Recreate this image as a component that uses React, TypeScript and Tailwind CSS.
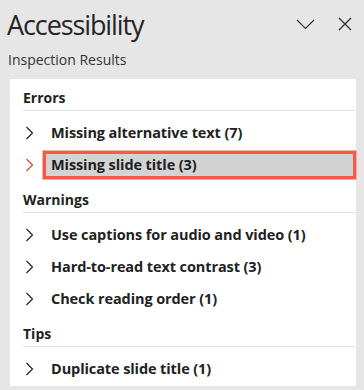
import React from "react";

const Chevron = ({ red = false }: { red?: boolean }) => (
  <svg width="9" height="14" viewBox="0 0 9 14" className="shrink-0">
    <path d="M1.5 1 L7.5 7 L1.5 13" fill="none" stroke={red ? "#d2472f" : "#222"} strokeWidth="1.2" />
  </svg>
);

const Heading = ({ children }: { children: React.ReactNode }) => (
  <div className="mr-[1px] h-[32px] flex items-center pt-[5px] border-b border-[#e1e1e1] text-[14px] font-bold text-[#222] mb-[6px]">
    {children}
  </div>
);

const Row = ({ children }: { children: React.ReactNode }) => (
  <div className="h-[32px] flex items-center">
    <div className="w-[28px] pl-[2px] flex items-center">
      <Chevron />
    </div>
    <span className="text-[14.5px] font-bold text-[#222] tracking-[-0.1px]">{children}</span>
  </div>
);

export default function App() {
  return (
    <div
      className="w-[364px] h-[390px] bg-[#e6e6e6] flex flex-col overflow-hidden"
      style={{ fontFamily: '"Open Sans", "Noto Sans", sans-serif' }}
    >
      <div className="flex items-start justify-between pl-[7px] pr-[12px] pt-[6px] h-[47px]">
        <div className="text-[27px] leading-[38px] text-[#262626] font-normal tracking-[-1.1px]">Accessibility</div>
        <div className="flex items-center gap-[23px] pt-[11px]">
          <svg width="19" height="11" viewBox="0 0 19 11">
            <path d="M1 1 L9.5 9.5 L18 1" fill="none" stroke="#333" strokeWidth="1.2" />
          </svg>
          <svg width="14" height="14" viewBox="0 0 14 14">
            <path d="M1 1 L13 13 M13 1 L1 13" fill="none" stroke="#333" strokeWidth="1.4" />
          </svg>
        </div>
      </div>
      <div className="pl-[8px] h-[32px] text-[14px] leading-[20px] text-[#333] pt-[3px]">Inspection Results</div>
      <div className="ml-[10px] w-[346px] h-[307px] bg-white pl-[13px] flex flex-col">
        <Heading>Errors</Heading>
        <Row>Missing alternative text (7)</Row>
        <div className="h-[32px] flex items-center">
          <div className="w-[20px] pl-[2px] flex items-center">
            <Chevron red />
          </div>
          <div className="flex-1 h-[28px] flex items-center bg-[#d3d3d3] border-[3px] border-[#f25a4c] shadow-[0_0_0_1px_#f8b0a8] pl-[5px]">
            <span className="text-[14.5px] font-bold text-[#222] tracking-[-0.1px]">Missing slide title (3)</span>
          </div>
        </div>
        <Heading>Warnings</Heading>
        <Row>Use captions for audio and video (1)</Row>
        <Row>Hard-to-read text contrast (3)</Row>
        <Row>Check reading order (1)</Row>
        <Heading>Tips</Heading>
        <Row>Duplicate slide title (1)</Row>
      </div>
    </div>
  );
}
